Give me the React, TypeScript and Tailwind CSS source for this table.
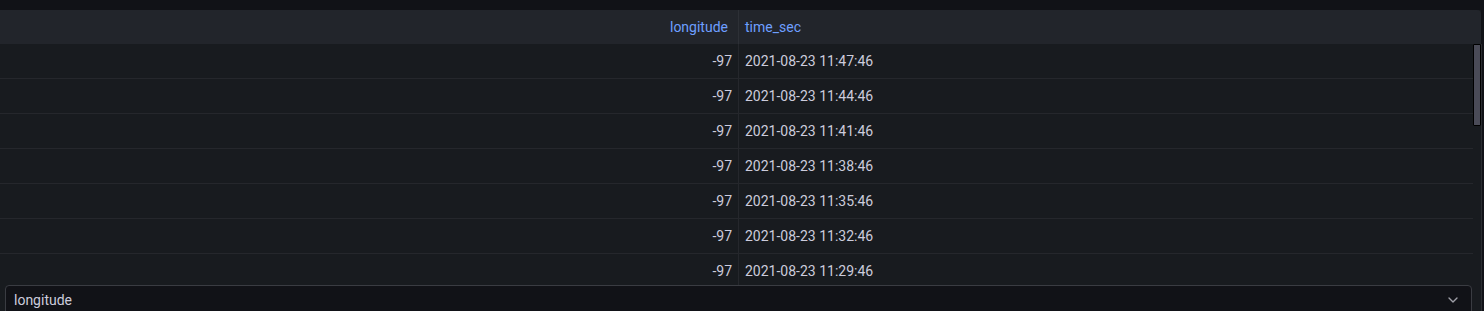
import { ChevronDown } from "lucide-react";

const rows = [
    "2021-08-23 11:47:46",
    "2021-08-23 11:44:46",
    "2021-08-23 11:41:46",
    "2021-08-23 11:38:46",
    "2021-08-23 11:35:46",
    "2021-08-23 11:32:46",
    "2021-08-23 11:29:46",
];

export default function App() {
    return (
        <div className="h-[311px] w-[1484px] overflow-hidden bg-[#111217] text-sm text-[#ccccdc]" style={{ fontFamily: "Roboto, 'Liberation Sans', sans-serif" }}>
            <div className="h-[10px]" />
            <div className="flex">
                <div className="w-[1481px] bg-[#181b1f]">
                    {/* header */}
                    <div className="flex h-[34px] rounded-tr bg-[#22252b] text-[#6e9fff]">
                        <div className="flex w-[739px] items-center justify-end border-r border-[#2d3036] pr-[10px]">longitude</div>
                        <div className="flex flex-1 items-center pl-[6px]">time_sec</div>
                    </div>
                    {/* body */}
                    <div className="relative h-[241px] overflow-hidden">
                        {rows.map((t) => (
                            <div key={t} className="flex h-[35px] w-[1473px] border-b border-[#25272c]">
                                <div className="flex w-[739px] items-center justify-end border-r border-[#25272c] pr-[6px]">-97</div>
                                <div className="flex flex-1 items-center pl-[6px]">{t}</div>
                            </div>
                        ))}
                        <div className="absolute right-0 top-0 h-[82px] w-[8px] rounded-[1px] border border-black bg-[#4a4b57]" />
                    </div>
                    <div className="h-[26px] pl-[5px]">
                        <div className="flex h-[32px] w-[1467px] items-center justify-between rounded-sm border border-[#3a3c42] bg-[#111217] pl-[8px] pr-[10px]">
                            <span className="-mt-[2px]">longitude</span>
                            <ChevronDown className="-mt-[2px] h-4 w-4 text-[#9fa0a8]" strokeWidth={2} />
                        </div>
                    </div>
                </div>
                <div className="mt-[34px] w-[3px] border-l border-[#2a2c31]" />
            </div>
        </div>
    );
}
